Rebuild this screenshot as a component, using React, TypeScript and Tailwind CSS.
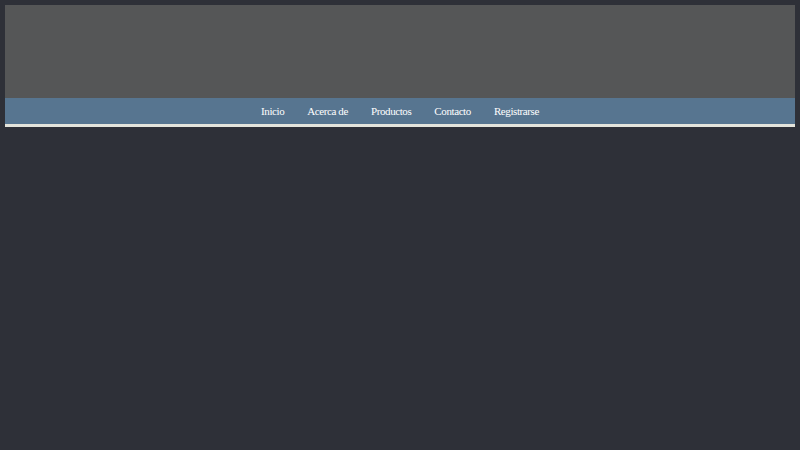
export default function App() {
  const links = ['Inicio', 'Acerca de', 'Productos', 'Contacto', 'Registrarse']
  return (
    <div className="min-h-[450px] bg-[#2e3038] p-[5px]">
      <header className="border-b-[3px] border-[#e4e4dc]">
        <div className="h-[93px] bg-[#555657]" />
        <nav className="flex h-[26px] items-center justify-center gap-[23px] bg-[#577590] font-['Liberation_Serif',serif] text-[11px] tracking-[-0.4px] text-white">
          {links.map((link) => (
            <a key={link} href="#" className="text-white">
              {link}
            </a>
          ))}
        </nav>
      </header>
    </div>
  )
}
